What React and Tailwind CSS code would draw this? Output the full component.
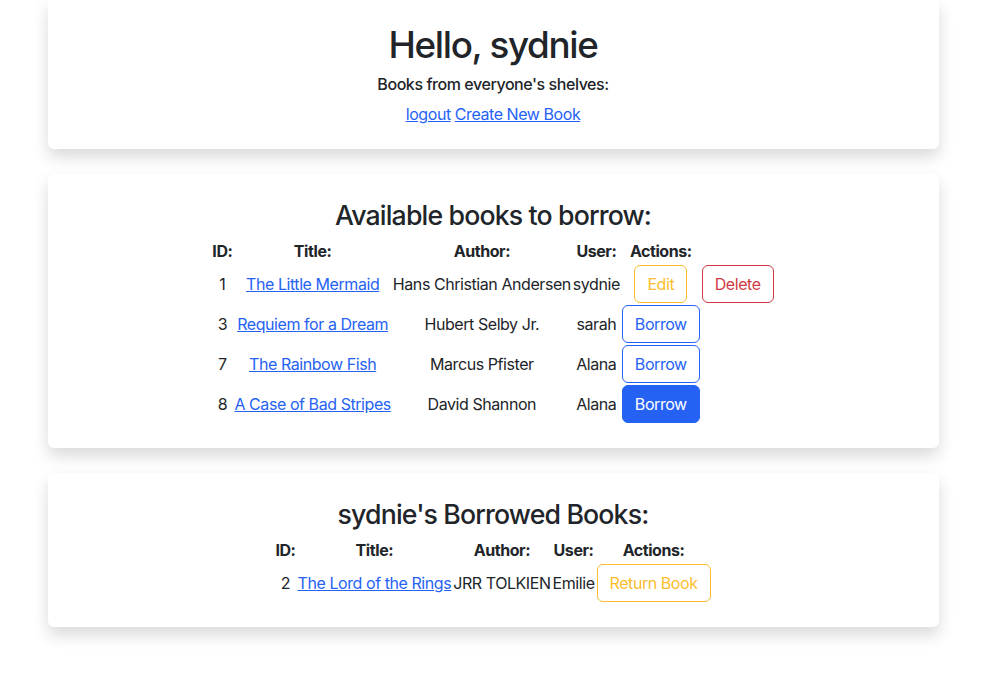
import React from "react";

const font = { fontFamily: '"Inter", "Liberation Sans", sans-serif' };

function Btn({ variant, children }) {
  const cls = {
    warn: "border-[#fbbd2e] text-[#fbbd2e] bg-white",
    danger: "border-[#d13a43] text-[#d13a43] bg-white",
    outline: "border-[#2562f4] text-[#2562f4] bg-white",
    primary: "border-[#2562f4] text-white bg-[#2562f4]",
  }[variant];
  return (
    <button className={`inline-block border rounded-[6px] px-3 py-[6px] text-base leading-6 tracking-[-0.027em] ${cls}`}>
      {children}
    </button>
  );
}

function A({ children }) {
  return <a href="#" className="text-[#2562f4] underline">{children}</a>;
}

const td = "p-px text-center align-middle";
const th = "p-px text-center font-bold";

export default function App() {
  return (
    <div style={font} className="min-h-[690px] bg-white text-[#212529] text-base leading-6 tracking-[-0.027em]">
      <div className="w-[891px] mx-auto flex flex-col gap-[25px] text-center">
        <div className="bg-white rounded-b-[6px] shadow-[0_0.5rem_1rem_rgba(0,0,0,0.15)] px-4 pt-[23px] pb-[23px]">
          <h1 className="text-[36.8px] leading-[1.2] font-medium mb-2 tracking-[-0.036em]">Hello, sydnie</h1>
          <h6 className="text-base leading-[1.2] font-medium mb-2">Books from everyone's shelves:</h6>
          <p>
            <A>logout</A> <A>Create New Book</A>
          </p>
        </div>

        <div className="bg-white rounded-[6px] shadow-[0_0.5rem_1rem_rgba(0,0,0,0.15)] px-6 pt-[25px] pb-6">
          <h3 className="text-[26.7px] leading-[1.2] font-medium mb-[7px] tracking-[-0.032em]">Available books to borrow:</h3>
          <table className="mx-auto">
            <thead>
              <tr>
                <th className={th}>ID:</th>
                <th className={th}>Title:</th>
                <th className={th}>Author:</th>
                <th className={th}>User:</th>
                <th className={th}>Actions:</th>
              </tr>
            </thead>
            <tbody>
              <tr>
                <td className={td}>1</td>
                <td className={td}><A>The Little Mermaid</A></td>
                <td className={td}>Hans Christian Andersen</td>
                <td className={td}>sydnie</td>
                <td className={td}><Btn variant="warn">Edit</Btn></td>
                <td className={td}><Btn variant="danger">Delete</Btn></td>
              </tr>
              <tr>
                <td className={td}>3</td>
                <td className={td}><A>Requiem for a Dream</A></td>
                <td className={td}>Hubert Selby Jr.</td>
                <td className={td}>sarah</td>
                <td className={td}><Btn variant="outline">Borrow</Btn></td>
              </tr>
              <tr>
                <td className={td}>7</td>
                <td className={td}><A>The Rainbow Fish</A></td>
                <td className={td}>Marcus Pfister</td>
                <td className={td}>Alana</td>
                <td className={td}><Btn variant="outline">Borrow</Btn></td>
              </tr>
              <tr>
                <td className={td}>8</td>
                <td className={td}><A>A Case of Bad Stripes</A></td>
                <td className={td}>David Shannon</td>
                <td className={td}>Alana</td>
                <td className={td}><Btn variant="primary">Borrow</Btn></td>
              </tr>
            </tbody>
          </table>
        </div>

        <div className="bg-white rounded-[6px] shadow-[0_0.5rem_1rem_rgba(0,0,0,0.15)] px-6 pt-[25px] pb-6">
          <h3 className="text-[26.7px] leading-[1.2] font-medium mb-[7px] tracking-[-0.032em]">sydnie's Borrowed Books:</h3>
          <table className="mx-auto">
            <thead>
              <tr>
                <th className={th}>ID:</th>
                <th className={th}>Title:</th>
                <th className={th}>Author:</th>
                <th className={th}>User:</th>
                <th className={th}>Actions:</th>
              </tr>
            </thead>
            <tbody>
              <tr>
                <td className={td}>2</td>
                <td className={td}><A>The Lord of the Rings</A></td>
                <td className={td}>JRR TOLKIEN</td>
                <td className={td}>Emilie</td>
                <td className={td}><Btn variant="warn">Return Book</Btn></td>
              </tr>
            </tbody>
          </table>
        </div>
      </div>
    </div>
  );
}
